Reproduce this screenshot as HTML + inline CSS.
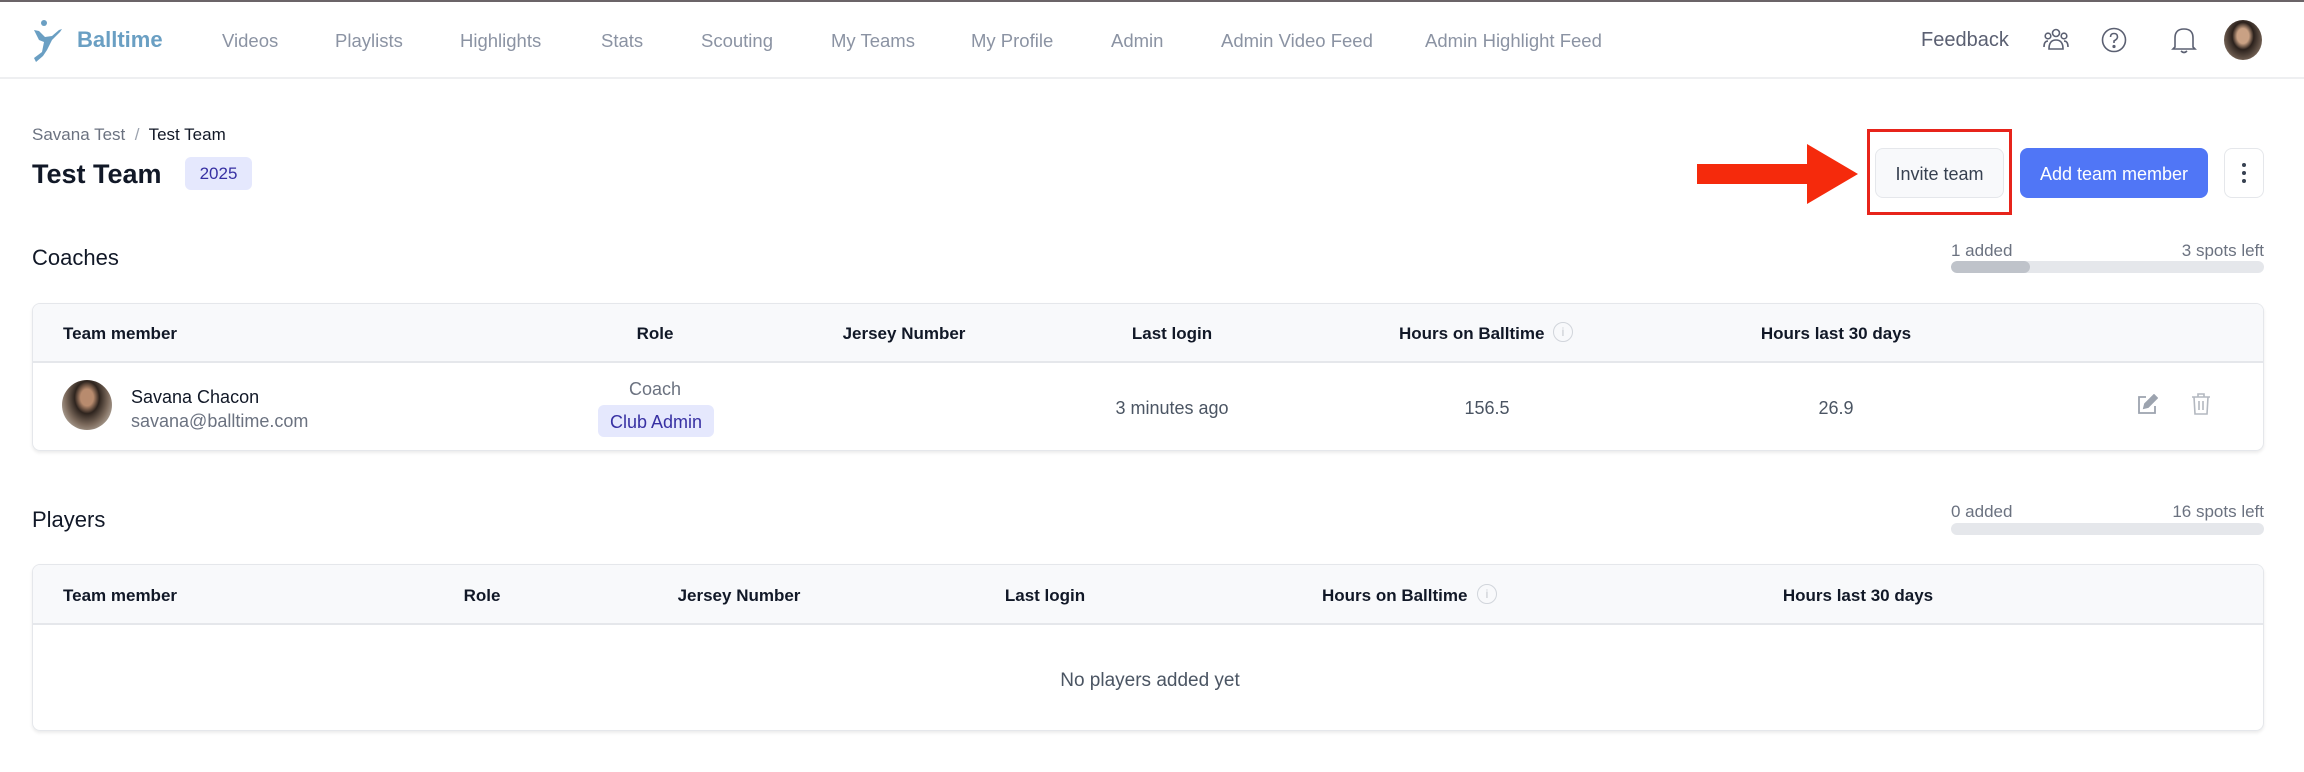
<!DOCTYPE html>
<html><head><meta charset="utf-8"><style>
*{margin:0;padding:0;box-sizing:border-box}
body{width:2304px;height:772px;background:#fff;font-family:"Liberation Sans",sans-serif;position:relative;overflow:hidden;color:#111827}
.a{position:absolute;white-space:nowrap}
.nav{font-size:18.5px;color:#8b93a3;top:30px}
.th{font-size:17px;font-weight:bold;color:#111827}
.c{transform:translateX(-50%)}
.td{font-size:18px;color:#4b5563}
</style></head><body>
<div class="a" style="left:0;top:0;width:2304px;height:2px;background:#6b6468"></div>
<div class="a" style="left:0;top:77px;width:2304px;height:2px;background:#eeeff1"></div>
<svg class="a" style="left:30px;top:18px" width="40" height="46" viewBox="0 0 40 46">
<circle cx="14" cy="5" r="3" fill="#6a9fc3"/>
<path d="M4 12 L9 22 L14 24 L12 34 L4 40 L6 44 L13 38 L17 32 L22 22 L30 14 L32 11 L29 12 L22 18 L15 19 L9 13 Z" fill="#6a9fc3"/>
</svg>
<div class="a" style="left:77px;top:27px;font-size:22px;font-weight:bold;color:#6a9fc3">Balltime</div>
<div class="a nav" style="left:222px">Videos</div>
<div class="a nav" style="left:335px">Playlists</div>
<div class="a nav" style="left:460px">Highlights</div>
<div class="a nav" style="left:601px">Stats</div>
<div class="a nav" style="left:701px">Scouting</div>
<div class="a nav" style="left:831px">My Teams</div>
<div class="a nav" style="left:971px">My Profile</div>
<div class="a nav" style="left:1111px">Admin</div>
<div class="a nav" style="left:1221px">Admin Video Feed</div>
<div class="a nav" style="left:1425px">Admin Highlight Feed</div>
<div class="a" style="left:1921px;top:29px;font-size:20px;color:#5b6072">Feedback</div>
<svg class="a" style="left:2042px;top:26px" width="28" height="28" viewBox="0 0 28 28" fill="none" stroke="#5b6072" stroke-width="1.6">
<circle cx="14" cy="7" r="3.5"/><circle cx="6" cy="10" r="2.8"/><circle cx="22" cy="10" r="2.8"/>
<path d="M7 23 Q7 14 14 14 Q21 14 21 23 Z"/><path d="M2 21 Q2 15 6 15"/><path d="M26 21 Q26 15 22 15"/></svg>
<svg class="a" style="left:2100px;top:26px" width="28" height="28" viewBox="0 0 28 28" fill="none" stroke="#5b6072" stroke-width="1.6">
<circle cx="14" cy="14" r="11.5"/><path d="M10.5 11 Q10.5 7.5 14 7.5 Q17.5 7.5 17.5 11 Q17.5 13 14 15 V17"/><circle cx="14" cy="20.5" r="0.8" fill="#5b6072"/></svg>
<svg class="a" style="left:2170px;top:25px" width="28" height="30" viewBox="0 0 28 30" fill="none" stroke="#5b6072" stroke-width="1.6">
<path d="M5 22 V13 Q5 4 14 4 Q23 4 23 13 V22 L25 24 H3 Z"/><path d="M11 26 Q14 29 17 26"/></svg>
<div class="a" style="left:2224px;top:20px;width:38px;height:40px;border-radius:50%;background:radial-gradient(ellipse at 50% 40%,#c9a184 0 22%,#2b211c 40%,#6b5a4e 70%,#d8d4cc 100%)"></div>

<div class="a" style="left:32px;top:125px;font-size:17px;color:#6b7280">Savana Test <span style="color:#9ca3af">&nbsp;/&nbsp;</span> <span style="color:#111827">Test Team</span></div>
<div class="a" style="left:32px;top:159px;font-size:27px;font-weight:bold;color:#111827">Test Team</div>
<div class="a" style="left:185px;top:157px;width:67px;height:33px;border-radius:6px;background:#e5e8fd;color:#3730a3;font-size:17px;text-align:center;line-height:33px">2025</div>

<svg class="a" style="left:1697px;top:144px" width="162" height="61"><path d="M0 20 H110 V0 L161 30 L110 60 V40 H0 Z" fill="#f52a0c"/></svg>
<div class="a" style="left:1867px;top:129px;width:145px;height:86px;border:3px solid #e7241b"></div>
<div class="a" style="left:1875px;top:148px;width:129px;height:50px;border:1px solid #e5e7eb;border-radius:8px;background:#f8f9fb;font-size:18px;color:#374151;text-align:center;line-height:50px">Invite team</div>
<div class="a" style="left:2020px;top:148px;width:188px;height:50px;border-radius:8px;background:#5076f6;font-size:18px;color:#fff;text-align:center;line-height:52px">Add team member</div>
<div class="a" style="left:2224px;top:148px;width:40px;height:50px;border:1px solid #e5e7eb;border-radius:8px"></div>
<div class="a" style="left:2242px;top:163px;width:4px;height:4px;border-radius:50%;background:#374151;box-shadow:0 8px 0 #374151,0 16px 0 #374151"></div>

<div class="a" style="left:32px;top:245px;font-size:22px;color:#111827">Coaches</div>
<div class="a" style="left:1951px;top:241px;font-size:17px;color:#6b7280">1 added</div>
<div class="a" style="right:40px;top:241px;font-size:17px;color:#6b7280">3 spots left</div>
<div class="a" style="left:1951px;top:261px;width:313px;height:12px;border-radius:6px;background:#e5e7eb;overflow:hidden"><div style="width:79px;height:12px;background:#bfc3ca;border-radius:6px"></div></div>

<div class="a" style="left:32px;top:303px;width:2232px;height:148px;border:1px solid #e5e7eb;border-radius:8px;box-shadow:0 2px 3px rgba(0,0,0,.08);overflow:hidden">
<div style="height:59px;background:#f8f9fb;border-bottom:2px solid #e5e7eb"></div></div>
<div class="a th" style="left:63px;top:324px">Team member</div>
<div class="a th c" style="left:655px;top:324px">Role</div>
<div class="a th c" style="left:904px;top:324px">Jersey Number</div>
<div class="a th c" style="left:1172px;top:324px">Last login</div>
<div class="a th" style="left:1399px;top:324px">Hours on Balltime</div>
<div class="a" style="left:1553px;top:322px;width:20px;height:20px;border:1px solid #d1d5db;border-radius:50%;font-size:12px;color:#c4c8ce;text-align:center;line-height:18px">i</div>
<div class="a th c" style="left:1836px;top:324px">Hours last 30 days</div>

<div class="a" style="left:62px;top:380px;width:50px;height:50px;border-radius:50%;background:radial-gradient(ellipse at 50% 35%,#b88b6e 0 18%,#2e241e 35%,#7c6a5c 60%,#e2ddd3 100%)"></div>
<div class="a" style="left:131px;top:387px;font-size:18px;color:#111827">Savana Chacon</div>
<div class="a" style="left:131px;top:411px;font-size:18px;color:#6b7280">savana@balltime.com</div>
<div class="a td c" style="left:655px;top:379px;color:#6b7280">Coach</div>
<div class="a" style="left:598px;top:405px;width:116px;height:32px;border-radius:6px;background:#e5e8fd;color:#3730a3;font-size:18px;text-align:center;line-height:34px">Club Admin</div>
<div class="a td c" style="left:1172px;top:398px">3 minutes ago</div>
<div class="a td c" style="left:1487px;top:398px">156.5</div>
<div class="a td c" style="left:1836px;top:398px">26.9</div>
<svg class="a" style="left:2136px;top:394px" width="22" height="22" viewBox="0 0 22 22" fill="none" stroke="#9ca3af" stroke-width="1.8"><path d="M10 3 H3 V19 H19 V12"/><path d="M8 14 L9 10 L18 1 L21 4 L12 13 Z" fill="#9ca3af"/></svg>
<svg class="a" style="left:2191px;top:392px" width="20" height="24" viewBox="0 0 20 24" fill="none" stroke="#b3b8c0" stroke-width="1.6"><path d="M1 5 H19 M7 5 V2 H13 V5 M3 5 L4 22 H16 L17 5 M8 9 V18 M12 9 V18"/></svg>

<div class="a" style="left:32px;top:507px;font-size:22px;color:#111827">Players</div>
<div class="a" style="left:1951px;top:502px;font-size:17px;color:#6b7280">0 added</div>
<div class="a" style="right:40px;top:502px;font-size:17px;color:#6b7280">16 spots left</div>
<div class="a" style="left:1951px;top:523px;width:313px;height:12px;border-radius:6px;background:#e5e7eb"></div>

<div class="a" style="left:32px;top:564px;width:2232px;height:167px;border:1px solid #e5e7eb;border-radius:8px;box-shadow:0 2px 3px rgba(0,0,0,.08);overflow:hidden">
<div style="height:60px;background:#f8f9fb;border-bottom:2px solid #e5e7eb"></div></div>
<div class="a th" style="left:63px;top:586px">Team member</div>
<div class="a th c" style="left:482px;top:586px">Role</div>
<div class="a th c" style="left:739px;top:586px">Jersey Number</div>
<div class="a th c" style="left:1045px;top:586px">Last login</div>
<div class="a th" style="left:1322px;top:586px">Hours on Balltime</div>
<div class="a" style="left:1477px;top:584px;width:20px;height:20px;border:1px solid #d1d5db;border-radius:50%;font-size:12px;color:#c4c8ce;text-align:center;line-height:18px">i</div>
<div class="a th c" style="left:1858px;top:586px">Hours last 30 days</div>
<div class="a c" style="left:1150px;top:670px;font-size:19px;color:#4b5563">No players added yet</div>
</body></html>
